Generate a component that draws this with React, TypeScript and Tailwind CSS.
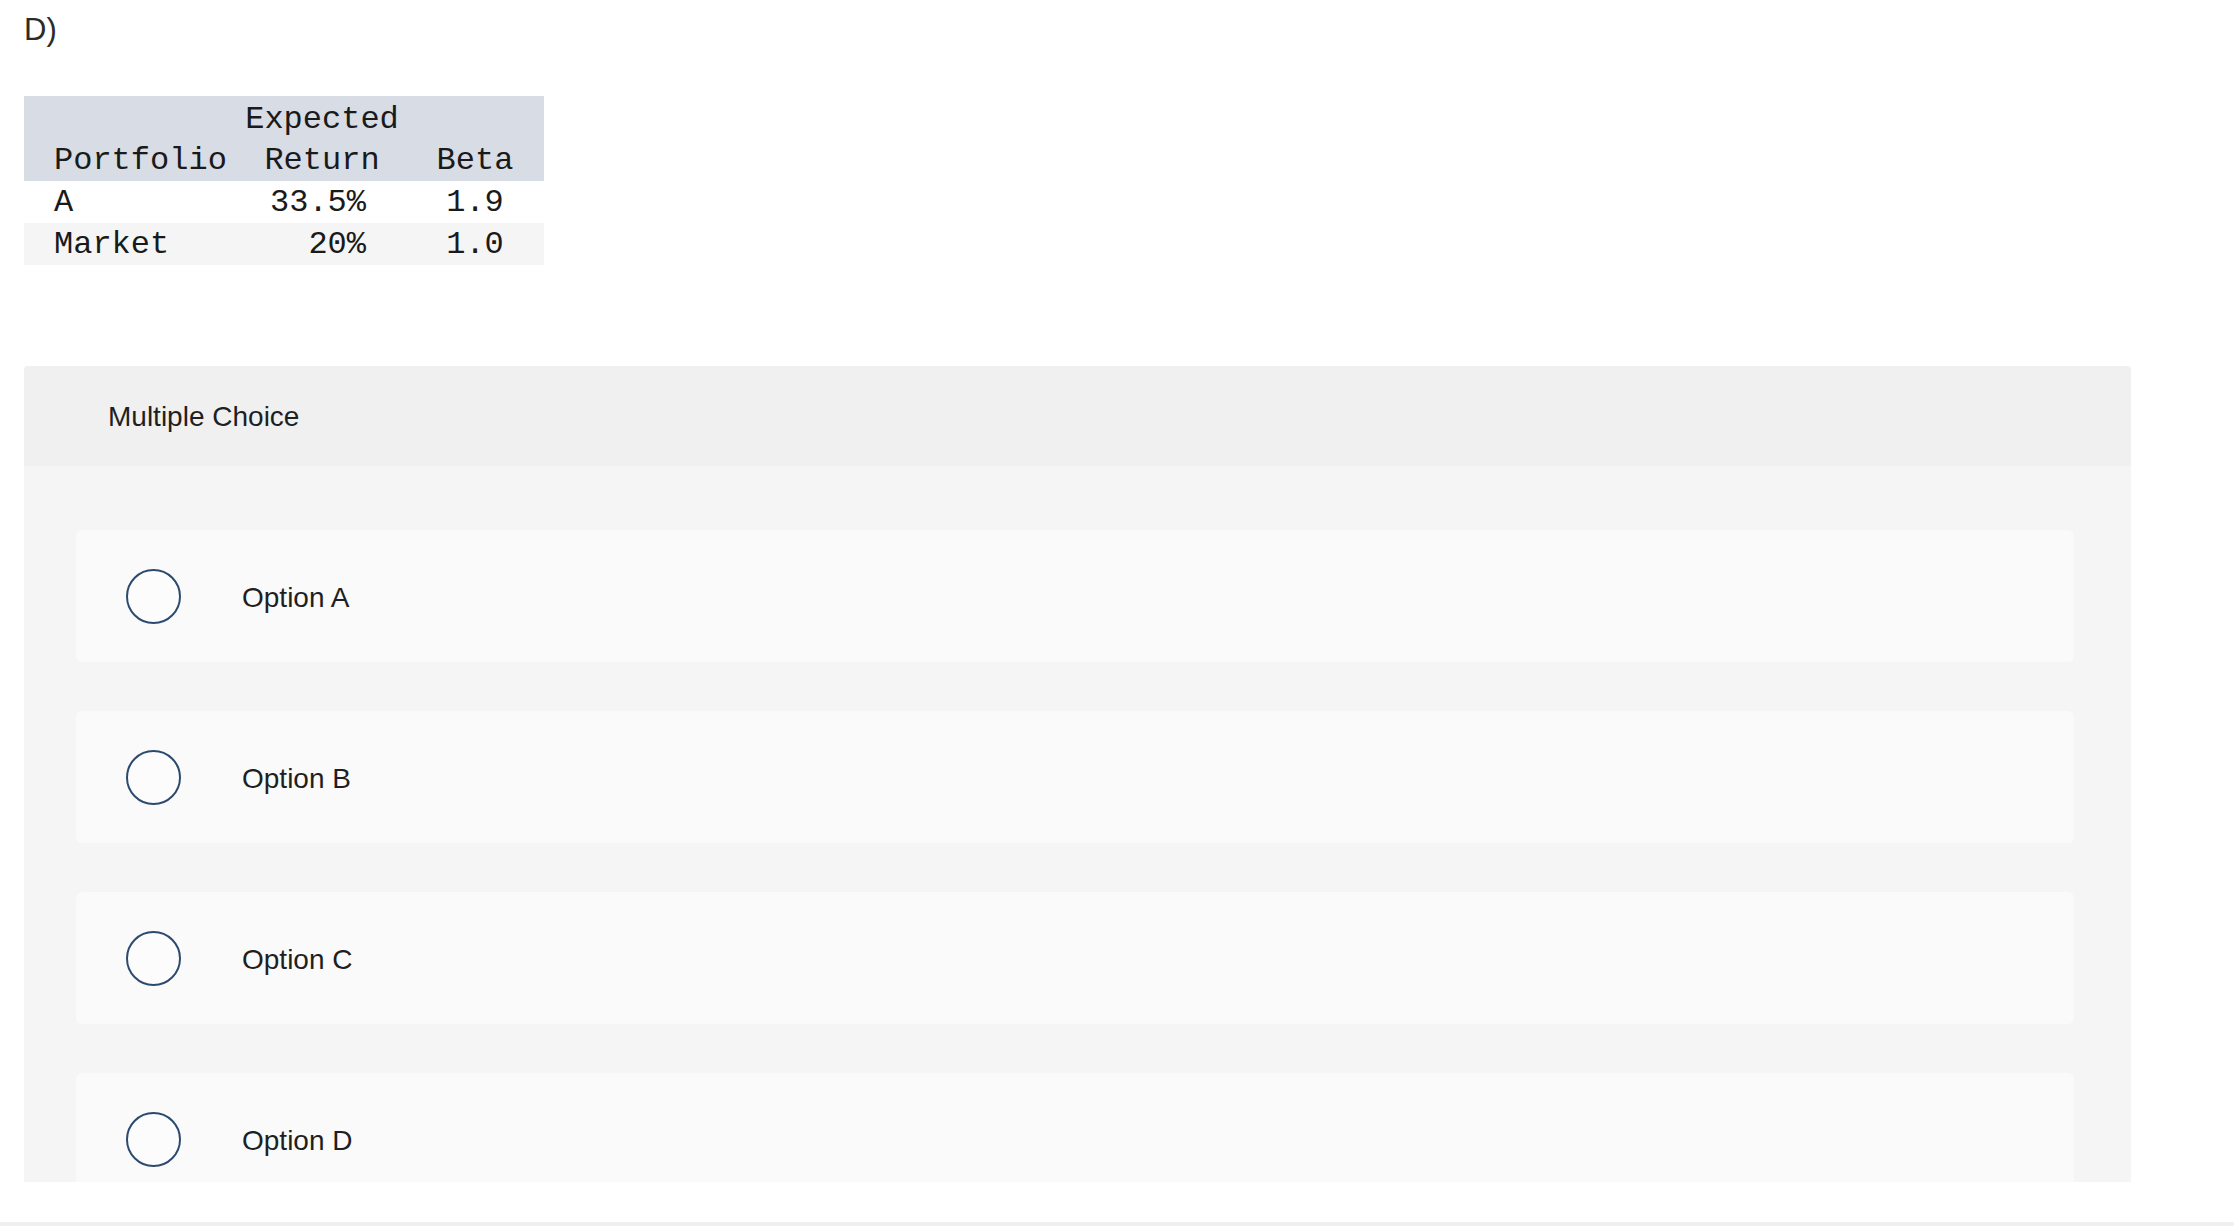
const rows = [
  { name: "A", ret: "33.5%", beta: "1.9", shade: false },
  { name: "Market", ret: "20%", beta: "1.0", shade: true },
]

const options = ["Option A", "Option B", "Option C", "Option D"]

const mono = "font-['Liberation_Mono','Courier_New',monospace]"

export default function App() {
  return (
    <div className="relative h-[1226px] w-full overflow-hidden bg-white font-['Liberation_Sans',Arial,sans-serif] text-[#1f1f1f]">
      <div className="pl-[24px] pt-[12px]">
        <p className="text-[31px] leading-[36px] text-[#2b2b2b]">D)</p>

        {/* portfolio table */}
        <div className={`mt-[48px] w-[520px] text-[32px] text-[#1a1a1a] ${mono}`}>
          <div className="grid grid-cols-[220px_156px_144px] bg-[#d8dce5] pt-[3px] leading-[41px]">
            <div />
            <div className="text-center">Expected</div>
            <div />
            <div className="pl-[30px]">Portfolio</div>
            <div className="text-center">Return</div>
            <div className="pl-[6px] text-center">Beta</div>
          </div>
          {rows.map((r) => (
            <div
              key={r.name}
              className={`grid h-[42px] grid-cols-[220px_156px_144px] items-center pt-[2px] leading-[40px] ${
                r.shade ? "bg-[#f5f5f5]" : "bg-white"
              }`}
            >
              <div className="pl-[30px]">{r.name}</div>
              <div className="pr-[34px] text-right">{r.ret}</div>
              <div className="pl-[6px] text-center">{r.beta}</div>
            </div>
          ))}
        </div>

        {/* multiple choice panel */}
        <div className="mt-[101px] flex h-[816px] w-[2107px] flex-col overflow-hidden rounded-t-[4px] bg-[#f5f5f5]">
          <div className="flex h-[100px] shrink-0 items-center bg-[#f0f0f0] pl-[84px] pt-[1px] text-[28px] text-[#1f1f1f]">
            Multiple Choice
          </div>
          <div className="flex flex-col gap-[49px] pl-[52px] pr-[57px] pt-[64px]">
            {options.map((opt) => (
              <div
                key={opt}
                className="flex h-[132px] shrink-0 items-center rounded-[6px] bg-[#fafafa] pl-[50px]"
              >
                <span className="h-[55px] w-[55px] shrink-0 rounded-full border-2 border-[#2c4a70] bg-[#fcfcfc]" />
                <span className="ml-[61px] pt-[3px] text-[28px] text-[#1f1f1f]">{opt}</span>
              </div>
            ))}
          </div>
        </div>
      </div>
      <div className="absolute bottom-0 left-0 h-[4px] w-full bg-[#f0f0f0]" />
    </div>
  )
}
